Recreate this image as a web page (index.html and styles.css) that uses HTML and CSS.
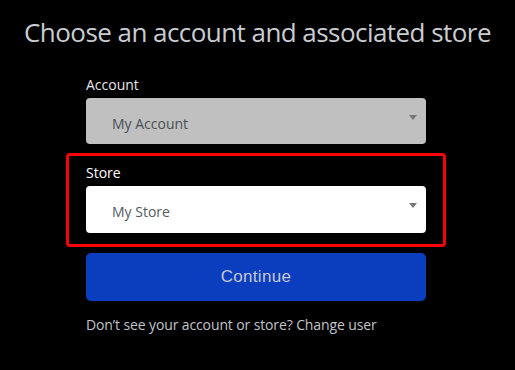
FILE: index.html
```html
<!doctype html>
<html lang="en">
  <head>
    <meta charset="utf-8">
    <meta name="viewport" content="width=device-width, initial-scale=1.0">
    <title>Choose an account</title>
    <link rel="stylesheet" href="styles.css">
  </head>
  <body>
    <main class="chooser">
      <h1 class="chooser-title">Choose an account and associated store</h1>

      <form class="chooser-form">
        <div class="field">
          <label class="field-label">Account</label>
          <div class="select select-disabled">
            <span class="select-value">My Account</span>
            <span class="select-caret"></span>
          </div>
        </div>

        <div class="field field-highlight">
          <label class="field-label">Store</label>
          <div class="select">
            <span class="select-value">My Store</span>
            <span class="select-caret"></span>
          </div>
        </div>

        <button type="button" class="btn-continue">Continue</button>

        <p class="chooser-help">Don’t see your account or store? <a href="#">Change user</a></p>
      </form>
    </main>
  </body>
</html>
```

FILE: styles.css
```css
* { box-sizing: border-box; }

:root {
  --font-family: "Open Sans", "Noto Sans", sans-serif;
  --text-color: #c9cdd1;
  --background-color: #000;
  --accent: #0b3dbf;
}

html,
body {
  margin: 0;
  padding: 0;
  background-color: var(--background-color);
  color: var(--text-color);
  font-family: var(--font-family);
}

.chooser {
  padding-top: 14px;
}

.chooser-title {
  margin: 0;
  text-align: center;
  font-size: 26px;
  font-weight: 400;
  letter-spacing: -0.55px;
  line-height: 36px;
}

.chooser-form {
  width: 340px;
  margin: 26px 0 0 86px;
}

/* Fields */
.field {
  display: flex;
  flex-direction: column;
}
.field-label {
  font-size: 14px;
  line-height: 18px;
  margin-bottom: 4px;
  color: #e6e6e6;
}

.field-highlight {
  margin: 9px -20px 0;
  padding: 8px 17px 11px;
  border: 3px solid #ff0000;
  border-radius: 4px;
}
.field-highlight .field-label {
  color: #fff;
}

.select {
  display: flex;
  align-items: center;
  justify-content: space-between;
  height: 47px;
  padding: 4px 9px 0 26px;
  background-color: #fff;
  border-radius: 4px;
  color: #555b62;
  font-size: 14px;
}
.select-disabled {
  background-color: #c0c0c0;
  height: 46px;
  color: #4a4f55;
}
.select-caret {
  width: 0;
  height: 0;
  border-left: 4px solid transparent;
  border-right: 4px solid transparent;
  border-top: 5px solid #777;
  margin-top: -12px;
}

/* Button */
.btn-continue {
  display: block;
  width: 100%;
  height: 48px;
  margin-top: 6px;
  border: 0;
  border-radius: 5px;
  background-color: var(--accent);
  color: #c6c9d2;
  font-family: "Liberation Sans", Arial, sans-serif;
  font-size: 17px;
  letter-spacing: 0.3px;
}

.chooser-help {
  margin: 14px 0 0;
  font-size: 14px;
  letter-spacing: -0.12px;
  color: #c0c4c8;
}
.chooser-help a {
  color: inherit;
  text-decoration: none;
}
```
